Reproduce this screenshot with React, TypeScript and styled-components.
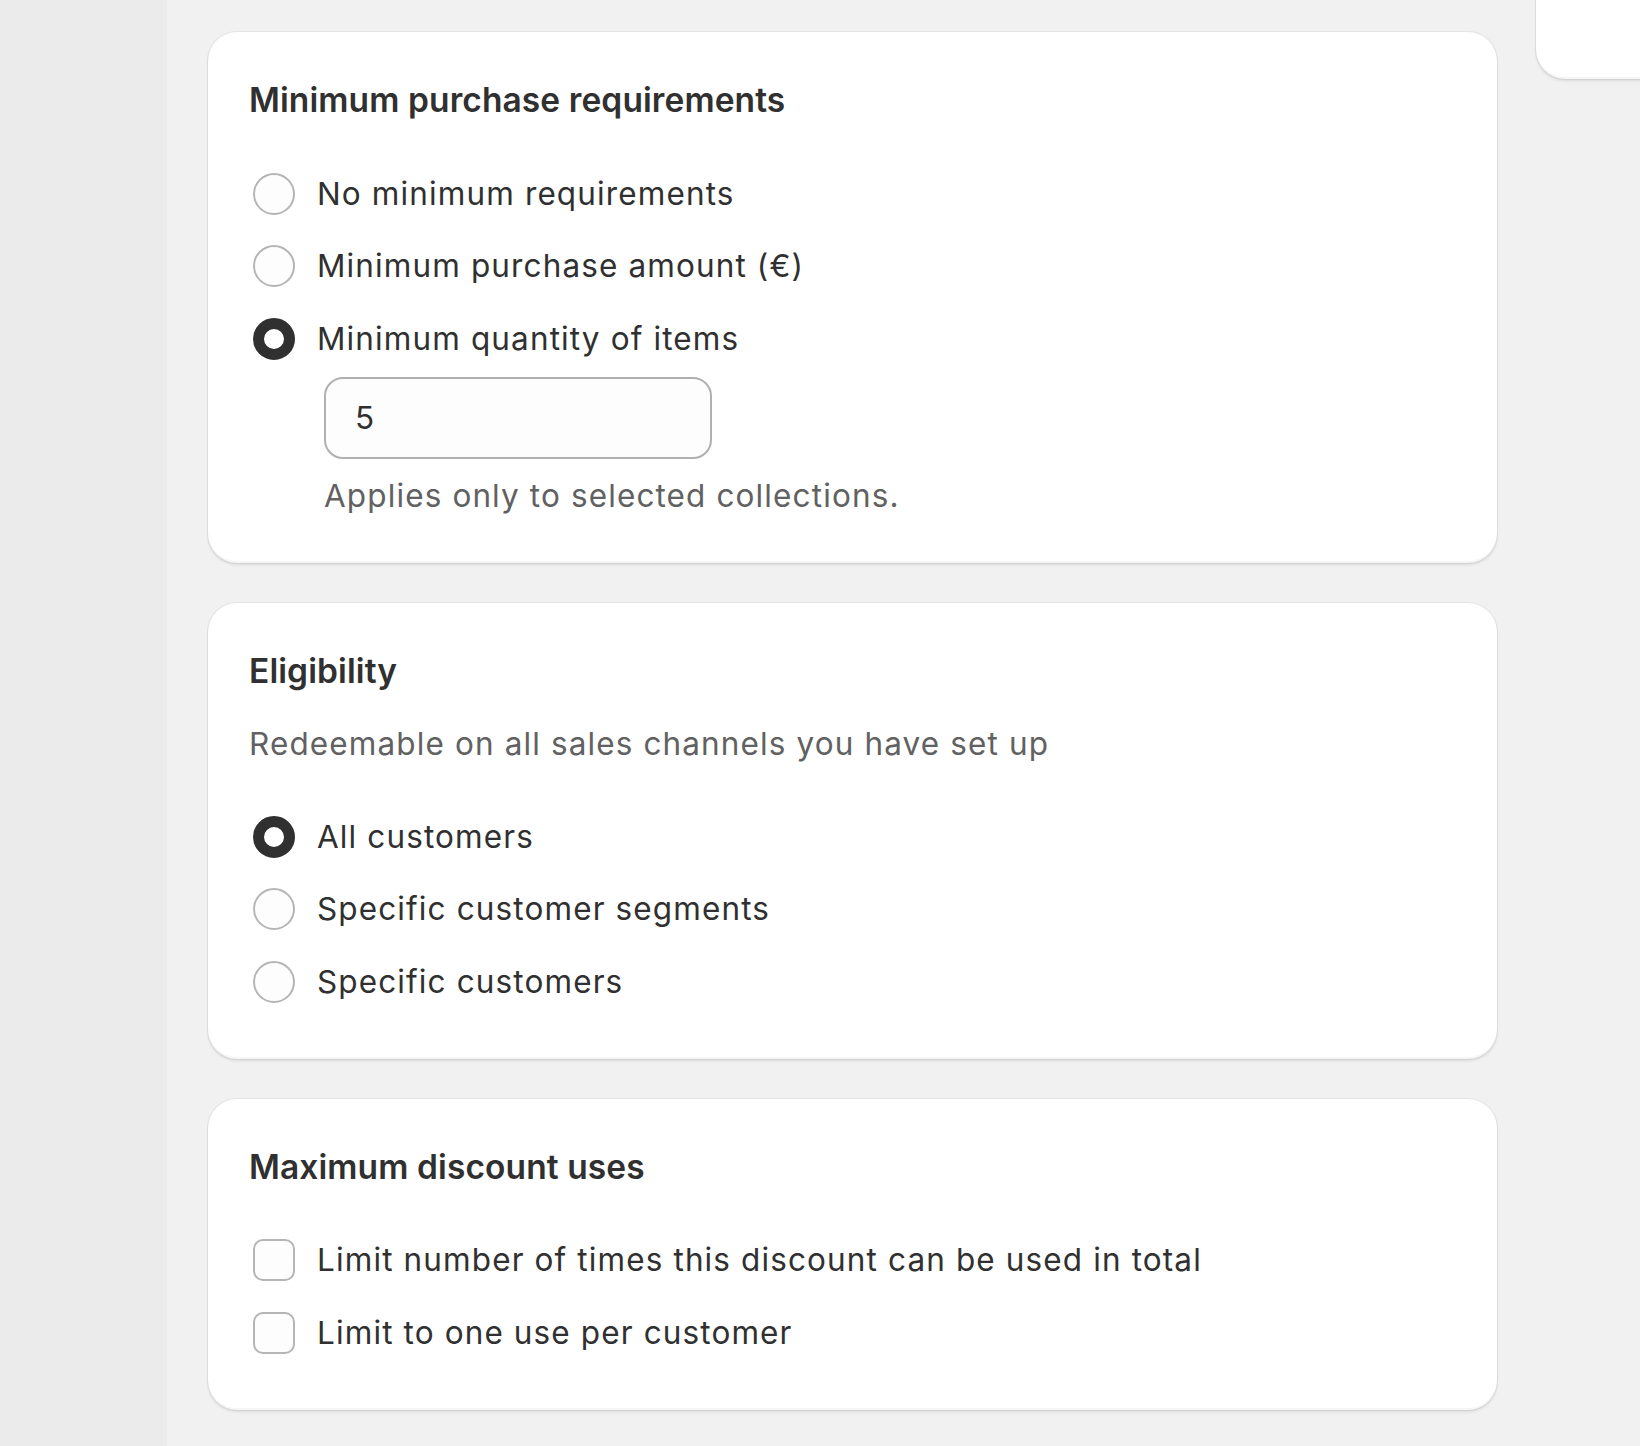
import React from 'react';
import styled, { createGlobalStyle } from 'styled-components';

const GlobalStyle = createGlobalStyle`
  html, body {
    margin: 0;
    padding: 0;
    background: #f1f1f1;
    overflow: hidden;
  }
  body {
    font-family: Inter, "Noto Sans", "Liberation Sans", sans-serif;
    color: #303030;
    -webkit-font-smoothing: antialiased;
  }
`;

const Page = styled.div`
  display: flex;
  min-height: 1446px;
  width: 1640px;
`;

const Sidebar = styled.div`
  width: 167px;
  flex-shrink: 0;
  background: #ebebeb;
`;

const Main = styled.div`
  flex: 1;
  display: flex;
  gap: 39px;
  padding: 32px 0 0 41px;
  overflow: hidden;
`;

const Column = styled.div`
  width: 1289px;
  flex-shrink: 0;
  display: flex;
  flex-direction: column;
  gap: 40px;
`;

const SideColumn = styled.div`
  width: 420px;
  flex-shrink: 0;
`;

const Card = styled.section`
  background: #ffffff;
  border-radius: 29px;
  padding: 44px 41px 53px;
  box-shadow: 0 2px 3px rgba(26, 26, 26, 0.1), 0 0 0 1px rgba(26, 26, 26, 0.05),
    inset 0 -2px 0 rgba(26, 26, 26, 0.04);
`;

const SideCard = styled(Card)`
  height: 110px;
  margin-top: -63px;
  padding: 0;
`;

const Title = styled.h2`
  margin: 0;
  font-size: 33.5px;
  line-height: 49px;
  font-weight: 600;
  letter-spacing: 0.1px;
  color: #303030;
`;

const Subtitle = styled.p`
  margin: 24px 0 0;
  font-size: 31.5px;
  line-height: 48px;
  letter-spacing: 1.12px;
  color: #616161;
`;

const List = styled.div<{ $top: number }>`
  display: flex;
  flex-direction: column;
  gap: 24.5px;
  margin-top: ${(p) => p.$top}px;
`;

const Row = styled.label`
  display: flex;
  align-items: center;
  height: 48px;
  gap: 22px;
  padding-left: 4px;
  font-size: 31.5px;
  line-height: 48px;
  letter-spacing: 1.12px;
  color: #303030;
`;

const Radio = styled.span<{ $checked?: boolean }>`
  box-sizing: border-box;
  width: 42px;
  height: 42px;
  flex-shrink: 0;
  border-radius: 50%;
  border: ${(p) => (p.$checked ? '11px solid #303030' : '2.5px solid #b5b5b5')};
  background: ${(p) => (p.$checked ? '#ffffff' : '#fdfdfd')};
`;

const Checkbox = styled.span`
  box-sizing: border-box;
  width: 42px;
  height: 42px;
  flex-shrink: 0;
  border-radius: 10px;
  background: #fdfdfd;
  border: 2.5px solid #b5b5b5;
`;

const Indented = styled.div`
  padding-left: 75px;
  margin-top: 14px;
`;

const QuantityInput = styled.input`
  box-sizing: border-box;
  display: block;
  width: 388px;
  height: 82px;
  border: 2.5px solid #b0b0b0;
  border-radius: 19px;
  background: #fdfdfd;
  padding: 0 29px;
  font-family: inherit;
  font-size: 31.5px;
  color: #303030;
  outline: none;
`;

const HelpText = styled.p`
  margin: 23px 0 0;
  font-size: 31.5px;
  line-height: 28px;
  letter-spacing: 1.12px;
  color: #616161;
`;

type Option = { label: string; checked?: boolean };

function RadioList({ options, top }: { options: Option[]; top: number }) {
  return (
    <List $top={top}>
      {options.map((o) => (
        <Row key={o.label}>
          <Radio $checked={o.checked} />
          {o.label}
        </Row>
      ))}
    </List>
  );
}

function CheckboxList({ options, top }: { options: string[]; top: number }) {
  return (
    <List $top={top}>
      {options.map((label) => (
        <Row key={label}>
          <Checkbox />
          {label}
        </Row>
      ))}
    </List>
  );
}

export default function App() {
  return (
    <>
      <GlobalStyle />
      <Page>
        <Sidebar />
        <Main>
          <Column>
            <Card>
              <Title>Minimum purchase requirements</Title>
              <RadioList
                top={44.5}
                options={[
                  { label: 'No minimum requirements' },
                  { label: 'Minimum purchase amount (€)' },
                  { label: 'Minimum quantity of items', checked: true },
                ]}
              />
              <Indented>
                <QuantityInput defaultValue="5" />
                <HelpText>Applies only to selected collections.</HelpText>
              </Indented>
            </Card>
            <Card>
              <Title>Eligibility</Title>
              <Subtitle>Redeemable on all sales channels you have set up</Subtitle>
              <RadioList
                top={45}
                options={[
                  { label: 'All customers', checked: true },
                  { label: 'Specific customer segments' },
                  { label: 'Specific customers' },
                ]}
              />
            </Card>
            <Card>
              <Title>Maximum discount uses</Title>
              <CheckboxList
                top={44.5}
                options={[
                  'Limit number of times this discount can be used in total',
                  'Limit to one use per customer',
                ]}
              />
            </Card>
          </Column>
          <SideColumn>
            <SideCard />
          </SideColumn>
        </Main>
      </Page>
    </>
  );
}
